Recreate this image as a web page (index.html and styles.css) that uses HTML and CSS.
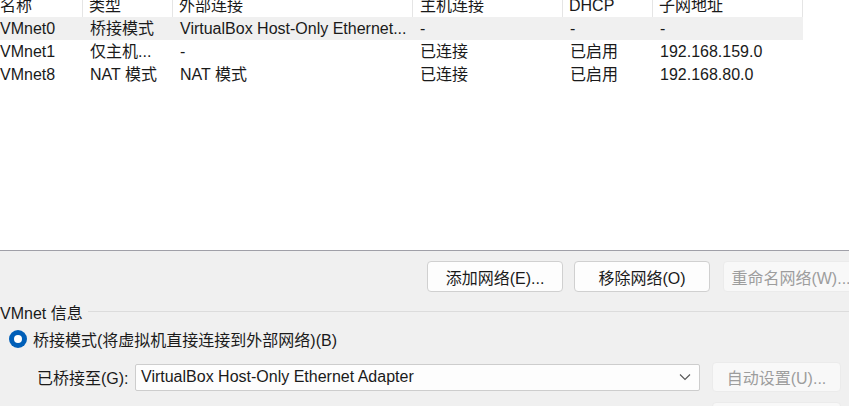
FILE: index.html
```html
<!DOCTYPE html>
<html lang="zh-CN">
<head>
<meta charset="utf-8">
<title>虚拟网络编辑器</title>
<link rel="stylesheet" href="styles.css">
</head>
<body>
<div class="list">
  <div class="table">
    <div class="row head">
      <div class="cell">名称</div>
      <div class="cell">类型</div>
      <div class="cell">外部连接</div>
      <div class="cell">主机连接</div>
      <div class="cell">DHCP</div>
      <div class="cell">子网地址</div>
    </div>
    <div class="row selected">
      <div class="cell">VMnet0</div>
      <div class="cell">桥接模式</div>
      <div class="cell">VirtualBox Host-Only Ethernet...</div>
      <div class="cell">-</div>
      <div class="cell">-</div>
      <div class="cell">-</div>
    </div>
    <div class="row">
      <div class="cell">VMnet1</div>
      <div class="cell">仅主机...</div>
      <div class="cell">-</div>
      <div class="cell">已连接</div>
      <div class="cell">已启用</div>
      <div class="cell">192.168.159.0</div>
    </div>
    <div class="row">
      <div class="cell">VMnet8</div>
      <div class="cell">NAT 模式</div>
      <div class="cell">NAT 模式</div>
      <div class="cell">已连接</div>
      <div class="cell">已启用</div>
      <div class="cell">192.168.80.0</div>
    </div>
  </div>
</div>

<div class="actions">
  <button class="btn">添加网络(E)...</button>
  <button class="btn">移除网络(O)</button>
  <button class="btn disabled">重命名网络(W)...</button>
</div>

<div class="group">
  <div class="group-title">
    <span>VMnet 信息</span>
    <span class="group-line"></span>
  </div>
  <div class="radio-row">
    <span class="radio"></span>
    <span>桥接模式(将虚拟机直接连接到外部网络)(B)</span>
  </div>
  <div class="bridge-row">
    <span class="bridge-label">已桥接至(G):</span>
    <div class="combo">
      <span>VirtualBox Host-Only Ethernet Adapter</span>
      <svg class="chev" width="12" height="8" viewBox="0 0 12 8"><path d="M1 1.5 L6 6.5 L11 1.5" fill="none" stroke="#555" stroke-width="1.1"/></svg>
    </div>
    <button class="btn disabled auto">自动设置(U)...</button>
  </div>
  <div class="next-row">
    <button class="btn disabled auto"></button>
  </div>
</div>
</body>
</html>
```

FILE: styles.css
```css
html, body {
  margin: 0;
  padding: 0;
}
body {
  width: 849px;
  height: 406px;
  overflow: hidden;
  background: #f0f0f0;
  font-family: "Liberation Sans", "Noto Sans CJK SC", sans-serif;
  font-size: 16px;
  color: #1a1a1a;
}
.list {
  height: 250px;
  background: #ffffff;
  border-bottom: 1px solid #a0a0a8;
  overflow: hidden;
}
.table {
  margin-top: -6px;
  width: 803px;
}
.row {
  display: grid;
  grid-template-columns: 83px 90px 240px 150px 90px 150px;
  height: 23px;
  align-items: center;
}
.cell {
  padding-left: 7px;
  white-space: nowrap;
  overflow: hidden;
  line-height: 23px;
}
.cell:first-child {
  padding-left: 0;
}
.head .cell {
  border-right: 1px solid #e5e5e5;
  height: 23px;
  box-sizing: border-box;
}
.head .cell:nth-child(2),
.head .cell:nth-child(3),
.head .cell:nth-child(5),
.head .cell:nth-child(6) {
  padding-left: 6px;
}
.selected {
  background: #f0f0f0;
}
.actions {
  display: flex;
  gap: 11px;
  padding-left: 427px;
  margin-top: 10px;
}
.btn {
  flex: none;
  width: 136px;
  height: 31px;
  box-sizing: border-box;
  border: 1px solid #d0d0d0;
  border-radius: 4px;
  background: #fdfdfd;
  font: inherit;
  color: #1a1a1a;
  padding: 0;
  white-space: nowrap;
}
.btn.disabled {
  border-color: #ebebeb;
  background: #f8f8f8;
  color: #9d9d9d;
  margin-left: 2px;
}
.group {
  margin-top: 10px;
}
.group-title {
  display: flex;
  align-items: center;
  height: 20px;
}
.group-line {
  flex: 1;
  height: 1px;
  background: #dcdcdc;
  margin-left: 5px;
  margin-top: -2px;
}
.radio-row {
  display: flex;
  align-items: center;
  gap: 6px;
  padding-left: 9px;
  height: 24px;
  margin-top: 5px;
}
.radio {
  width: 18px;
  height: 18px;
  border-radius: 50%;
  background: #005fb8;
  box-sizing: border-box;
  display: flex;
  align-items: center;
  justify-content: center;
}
.radio::after {
  content: "";
  width: 8px;
  height: 8px;
  border-radius: 50%;
  background: #ffffff;
}
.bridge-row {
  display: flex;
  align-items: center;
  margin-top: 11px;
  padding-left: 37px;
  height: 30px;
}
.bridge-label {
  width: 98px;
}
.combo {
  width: 565px;
  height: 27px;
  box-sizing: border-box;
  border: 1px solid #cdcdcd;
  border-radius: 2px;
  background: #fdfdfd;
  display: flex;
  align-items: center;
  justify-content: space-between;
  padding: 0 8px 0 5px;
  margin-right: 10px;
}
.chev {
  display: block;
}
.btn.auto {
  width: 129px;
  height: 30px;
  margin-left: 2px;
}
.next-row {
  display: flex;
  padding-left: 712px;
  margin-top: 10px;
}
.next-row .btn.auto {
  margin-left: 0;
}
```
